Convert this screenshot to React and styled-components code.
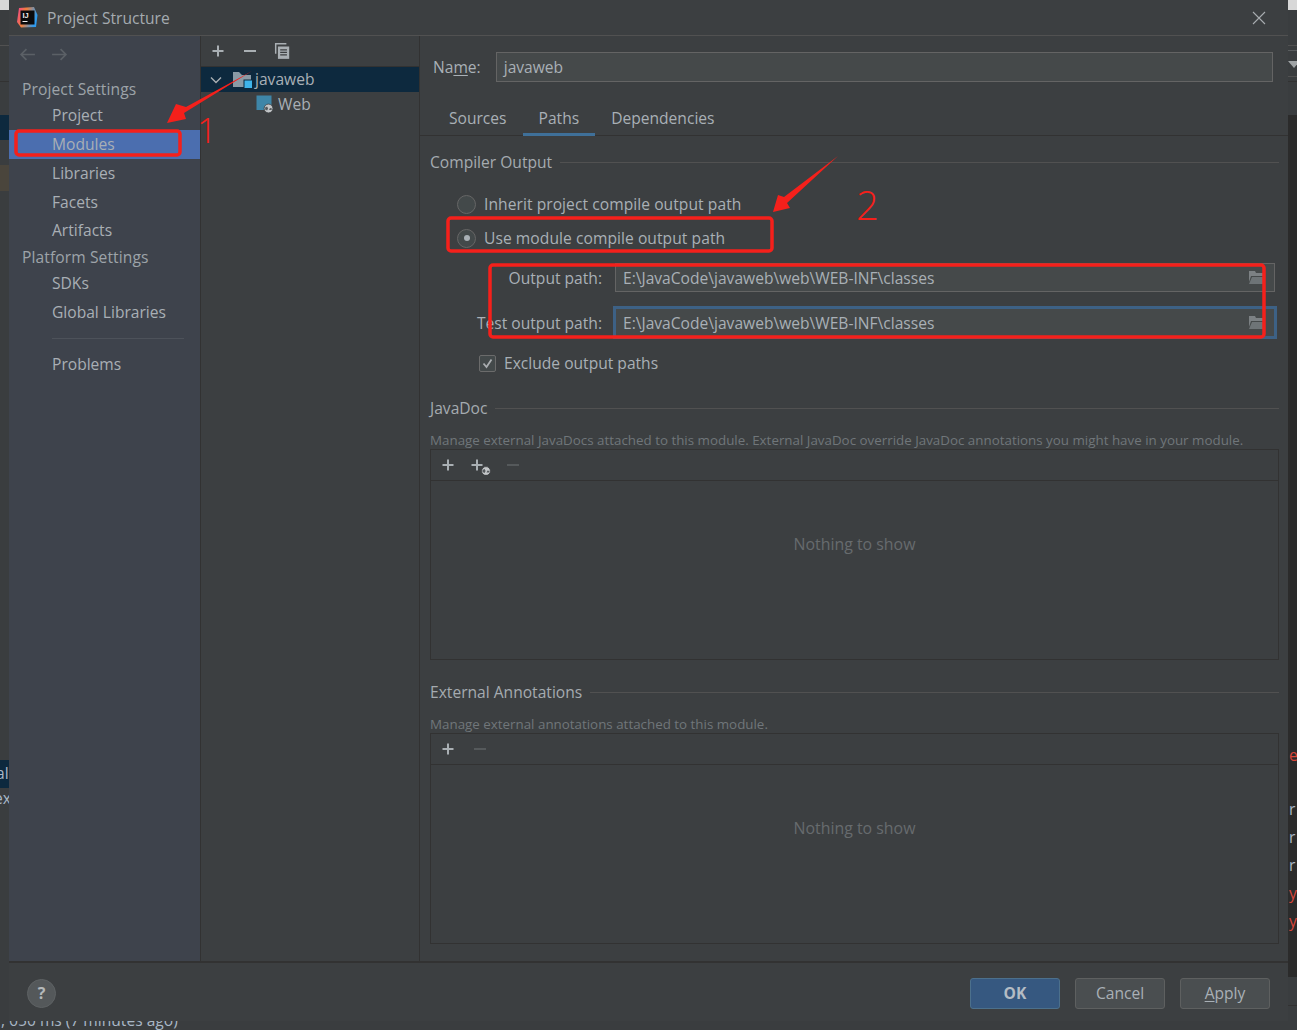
import styled, { createGlobalStyle } from "styled-components";

const GlobalStyle = createGlobalStyle`
  html, body {
    margin: 0;
    padding: 0;
    background: #2b2b2b;
  }
`;

const FONT = `"Open Sans", "Noto Sans", "Liberation Sans", sans-serif`;

const Screen = styled.div`
  position: relative;
  width: 1297px;
  height: 1030px;
  overflow: hidden;
  background: #3a3d3f;
  font-family: ${FONT};
  font-size: 15.6px;
  color: #a9b0b6;
`;
const BehindText = styled.span`
  position: absolute;
  left: ${(p) => p.$x}px;
  top: ${(p) => p.$y}px;
  color: ${(p) => p.$color || "#a9b7c6"};
  font-size: 15.6px;
  line-height: 18px;
  white-space: nowrap;
`;
const BehindBlock = styled.div`
  position: absolute;
  left: ${(p) => p.$x}px;
  top: ${(p) => p.$y}px;
  width: ${(p) => p.$w}px;
  height: ${(p) => p.$h}px;
  background: ${(p) => p.$color};
`;
const BehindTriangle = styled.div`
  position: absolute;
  left: 1288px;
  top: 61px;
  border-left: 6px solid transparent;
  border-right: 6px solid transparent;
  border-top: 7px solid #a0a4a6;
`;
const Dialog = styled.div`
  position: absolute;
  left: 9px;
  top: 0;
  width: 1279px;
  height: 1021px;
  display: flex;
  flex-direction: column;
  background: #3c3f41;
`;
const TitleBar = styled.div`
  height: 35px;
  flex: none;
  display: flex;
  align-items: center;
  padding: 0 22px 0 8px;
  gap: 9px;
  border-bottom: 1px solid #515151;
  color: #a5abb0;
`;
const TitleText = styled.span`
  flex: 1;
`;
const Main = styled.div`
  flex: 1;
  min-height: 0;
  display: flex;
  border-bottom: 2px solid #323232;
`;
const Sidebar = styled.div`
  width: 191px;
  flex: none;
  background: #3e434c;
  border-right: 1px solid #323232;
  display: flex;
  flex-direction: column;
`;
const NavArrows = styled.div`
  height: 36px;
  display: flex;
  align-items: center;
  gap: 15px;
  padding-left: 10px;
  margin-bottom: 4px;
`;
const NavHeading = styled.div`
  height: 26px;
  line-height: 26px;
  padding-left: 13px;
  color: #9da3a9;
  letter-spacing: 0.1px;
`;
const NavItem = styled.div`
  height: ${(p) => p.$h || 29}px;
  line-height: ${(p) => p.$h || 29}px;
  margin-bottom: ${(p) => p.$after || 0}px;
  padding-left: 43px;
  background: ${(p) => (p.$active ? "#4b6eaf" : "transparent")};
  color: #a9afb5;
`;
const NavDivider = styled.div`
  height: 1px;
  margin: 10px 16px 11px 43px;
  background: #4d525a;
`;
const TreePanel = styled.div`
  width: 218px;
  flex: none;
  border-right: 1px solid #323232;
  display: flex;
  flex-direction: column;
`;
const TreeTools = styled.div`
  height: 30px;
  display: flex;
  align-items: center;
  gap: 16px;
  padding-left: 9px;
  border-bottom: 1px solid #323232;
`;
const TreeRow = styled.div`
  height: 25px;
  display: flex;
  align-items: center;
  gap: ${(p) => p.$gap || 0}px;
  padding-left: ${(p) => p.$indent}px;
  background: ${(p) => (p.$selected ? "#0d293e" : "transparent")};
  color: #a9b0b6;
`;
const TreeLabel = styled.span`
  margin-left: ${(p) => p.$shift || 0}px;
  margin-top: -1px;
`;
const Content = styled.div`
  flex: 1;
  min-width: 0;
  display: flex;
  flex-direction: column;
`;
const NameRow = styled.div`
  display: flex;
  align-items: center;
  gap: 15px;
  padding: 16px 15px 0 13px;
`;
const Underlined = styled.span`
  text-decoration: underline;
  text-underline-offset: 2px;
`;
const Field = styled.div`
  flex: 1;
  height: ${(p) => p.$h || 30}px;
  box-sizing: border-box;
  display: flex;
  align-items: center;
  justify-content: space-between;
  padding: 0 9px 0 7px;
  background: #45494a;
  border: 1px solid #646464;
  color: #a9b0b6;
  white-space: nowrap;
`;
const Tabs = styled.div`
  height: 36px;
  margin-top: 17px;
  flex: none;
  display: flex;
  align-items: flex-end;
  padding-left: 13px;
  border-bottom: 1px solid #323232;
`;
const Tab = styled.div`
  height: 36px;
  box-sizing: border-box;
  padding: 6px 16px 0;
  line-height: 24px;
  color: #a9b0b6;
  border-bottom: 3px solid ${(p) => (p.$active ? "#3f7099" : "transparent")};
  margin-bottom: -1px;
`;
const Body = styled.div`
  flex: 1;
  min-height: 0;
  padding: 0 9px 0 10px;
  display: flex;
  flex-direction: column;
`;
const SectionTitle = styled.div`
  display: flex;
  align-items: center;
  gap: 8px;
  height: 20px;
  margin-top: ${(p) => p.$top}px;
  color: #a5abb0;
  white-space: nowrap;
  &::after {
    content: "";
    flex: 1;
    height: 1px;
    background: #515151;
  }
`;
const RadioRow = styled.div`
  display: flex;
  align-items: center;
  gap: 8px;
  height: 24px;
  margin-top: ${(p) => p.$top}px;
  padding-left: 27px;
  letter-spacing: 0.06px;
`;
const Radio = styled.span`
  width: 19px;
  height: 19px;
  box-sizing: border-box;
  border-radius: 50%;
  background: #43494a;
  border: 1px solid #666;
  display: flex;
  align-items: center;
  justify-content: center;
  &::after {
    content: "";
    display: ${(p) => (p.$on ? "block" : "none")};
    width: 6px;
    height: 6px;
    border-radius: 50%;
    background: #a9b0b6;
  }
`;
const PathRow = styled.div`
  display: flex;
  align-items: center;
  gap: 13px;
  margin-top: ${(p) => p.$top}px;
`;
const PathLabel = styled.span`
  width: 172px;
  flex: none;
  text-align: right;
  white-space: nowrap;
`;
const PathField = styled(Field)`
  margin-right: 4px;
  ${(p) => p.$focus && "outline: 2px solid #3d6185; border-color: #3d6185;"}
`;
const CheckRow = styled.div`
  display: flex;
  align-items: center;
  gap: 8px;
  margin-top: 14px;
  padding-left: 49px;
  height: 24px;
`;
const CheckBox = styled.span`
  width: 17px;
  height: 17px;
  box-sizing: border-box;
  display: flex;
  align-items: center;
  justify-content: center;
  background: #43494a;
  border: 1px solid #6b6b6b;
  border-radius: 2px;
`;
const Description = styled.div`
  margin-top: ${(p) => p.$top}px;
  height: 18px;
  line-height: 18px;
  font-size: 13.36px;
  color: #70767a;
  white-space: nowrap;
`;
const ListBox = styled.div`
  height: 211px;
  box-sizing: border-box;
  border: 1px solid #323232;
  display: flex;
  flex-direction: column;
`;
const ListTools = styled.div`
  height: 30px;
  flex: none;
  display: flex;
  align-items: center;
  gap: ${(p) => p.$gap}px;
  padding-left: 9px;
  border-bottom: 1px solid #323232;
`;
const EmptyText = styled.div`
  flex: 1;
  display: flex;
  align-items: center;
  justify-content: center;
  padding-bottom: 52px;
  color: #676b6e;
  font-size: 15.9px;
`;
const Footer = styled.div`
  height: 58px;
  box-sizing: border-box;
  flex: none;
  display: flex;
  align-items: center;
  justify-content: flex-end;
  gap: 15px;
  padding: 2px 18px 0 18px;
`;
const HelpButton = styled.div`
  width: 29px;
  height: 29px;
  margin-right: auto;
  border-radius: 50%;
  background: #54585a;
  border: 1px solid #5e6264;
  box-sizing: border-box;
  display: flex;
  align-items: center;
  justify-content: center;
  color: #b4b8ba;
  font-weight: 700;
  font-size: 16px;
`;
const Button = styled.div`
  width: 90px;
  height: 31px;
  box-sizing: border-box;
  display: flex;
  align-items: center;
  justify-content: center;
  border-radius: 3px;
  background: ${(p) => (p.$primary ? "#365880" : "#4a4e50")};
  border: 1px solid ${(p) => (p.$primary ? "#4c708c" : "#5e6060")};
  color: ${(p) => (p.$primary ? "#b4bcc4" : "#a9b0b6")};
  font-weight: ${(p) => (p.$primary ? 700 : 400)};
`;
const Annotation = styled.svg`
  position: absolute;
  left: 0;
  top: 0;
  pointer-events: none;
`;
const StepNumber = styled.span`
  position: absolute;
  left: ${(p) => p.$x}px;
  top: ${(p) => p.$y}px;
  font-family: "Open Sans", sans-serif;
  font-weight: 300;
  font-size: ${(p) => p.$size}px;
  line-height: 1;
  color: #f5201b;
`;

const IconSvg = ({ size = 16, children }) => (
  <svg width={size} height={size} viewBox="0 0 16 16" fill="none">
    {children}
  </svg>
);

const Logo = () => (
  <svg width="21" height="21" viewBox="0 0 21 21">
    <defs>
      <linearGradient id="ij" x1="0" y1="0" x2="1" y2="0.3">
        <stop offset="0" stopColor="#f23f8f" />
        <stop offset="0.45" stopColor="#f0803c" />
        <stop offset="1" stopColor="#2d9bf0" />
      </linearGradient>
    </defs>
    <path d="M2 1 L17 0 L20.5 8 L19 20 L4 20.5 L0 15 Z" fill="url(#ij)" />
    <rect x="3.5" y="3.5" width="14" height="14" fill="#0b0b0d" />
    <text x="5.5" y="10.5" fontFamily="Liberation Sans" fontWeight="700" fontSize="7.5" fill="#eee">
      IJ
    </text>
    <rect x="5.5" y="14" width="5" height="1" fill="#eee" />
  </svg>
);

const Plus = ({ color = "#a9afb3" }) => (
  <IconSvg>
    <path d="M8 2.5v11M2.5 8h11" stroke={color} strokeWidth="2" />
  </IconSvg>
);
const Minus = ({ color = "#a9afb3" }) => (
  <IconSvg>
    <path d="M2 8h12" stroke={color} strokeWidth="2" />
  </IconSvg>
);
const Copy = () => (
  <IconSvg size={18}>
    <path d="M1.5 10.5V1.5H11" stroke="#a9afb3" strokeWidth="1.3" />
    <rect x="3.5" y="4" width="10" height="11" fill="#a9afb3" />
    <path d="M5.5 7h6M5.5 9.2h6M5.5 11.4h6" stroke="#3c3f41" strokeWidth="1" />
  </IconSvg>
);
const Globe = ({ x, y, r = 3.4 }) => (
  <g>
    <circle cx={x} cy={y} r={r} fill="#c3c6c8" stroke="#3c3f41" strokeWidth="0.8" />
    <path
      d={`M${x - r + 1} ${y - 1}l2-1 1 2-1 2-2-1zM${x + 0.5} ${y + 1.5}l1-2 2 .5-.5 1.5z`}
      fill="#55595c"
    />
  </g>
);
const PlusGlobe = () => (
  <svg width="33" height="20" viewBox="0 0 33 20" fill="none">
    <path d="M13 4.5v11M7.5 10h11" stroke="#a9afb3" strokeWidth="2" />
    <Globe x={22} y={16} r={4.4} />
  </svg>
);
const ArrowLeft = () => (
  <IconSvg size={17}>
    <path d="M15 8H2M7 3L2 8l5 5" stroke="#5b6066" strokeWidth="1.6" />
  </IconSvg>
);
const ArrowRight = () => (
  <IconSvg size={17}>
    <path d="M1 8h13M9 3l5 5-5 5" stroke="#5b6066" strokeWidth="1.6" />
  </IconSvg>
);
const Chevron = () => (
  <svg width="12" height="8" viewBox="0 0 12 8" fill="none">
    <path d="M1 1.5l5 5 5-5" stroke="#a9afb3" strokeWidth="1.4" />
  </svg>
);
const ModuleIcon = () => (
  <svg width="20" height="20" viewBox="0 0 20 20">
    <path d="M0 2h6l3 3h9v12H0z" fill="#8a9aa5" />
    <rect x="11" y="10" width="8.5" height="8.5" fill="#3fb4ea" stroke="#0d293e" strokeWidth="1" />
  </svg>
);
const WebIcon = () => (
  <svg width="18" height="19" viewBox="0 0 18 19">
    <rect x="0.5" y="0.5" width="15" height="14.5" fill="#3e86a8" />
    <Globe x={12.5} y={13.5} r={4.4} />
  </svg>
);
const FolderIcon = () => (
  <svg width="17" height="15" viewBox="0 0 17 15">
    <path d="M1 1h6l1 2h8v3H3L1 12z" fill="#7c8184" />
    <path d="M4 7h13l-2 7H1z" fill="#6e7477" />
  </svg>
);
const CloseIcon = () => (
  <svg width="14" height="14" viewBox="0 0 14 14" fill="none">
    <path d="M1 1l12 12M13 1L1 13" stroke="#a9adb0" strokeWidth="1.1" />
  </svg>
);
const CheckMark = () => (
  <svg width="13" height="13" viewBox="0 0 13 13" fill="none">
    <path d="M2.5 6.5l3 3.5 5-7.5" stroke="#a9adb0" strokeWidth="1.8" />
  </svg>
);

const PATH = "E:\\JavaCode\\javaweb\\web\\WEB-INF\\classes";

const App = () => (
  <Screen>
    <GlobalStyle />

    <BehindBlock $x={0} $y={0} $w={9} $h={10} $color="#d8d8d8" />
    <BehindBlock $x={1288} $y={0} $w={9} $h={10} $color="#d8d8d8" />
    <BehindBlock $x={0} $y={45} $w={9} $h={1} $color="#515151" />
    <BehindBlock $x={0} $y={81} $w={9} $h={1} $color="#323232" />
    <BehindBlock $x={1288} $y={45} $w={9} $h={1} $color="#515151" />
    <BehindBlock $x={1288} $y={50} $w={9} $h={1} $color="#5a5d5f" />
    <BehindBlock $x={1288} $y={76} $w={9} $h={1} $color="#515151" />
    <BehindBlock $x={1288} $y={81} $w={9} $h={1} $color="#323232" />
    <BehindTriangle />
    <BehindBlock $x={0} $y={115} $w={9} $h={25} $color="#0d293e" />
    <BehindBlock $x={0} $y={165} $w={9} $h={26} $color="#4a453c" />
    <BehindBlock $x={0} $y={760} $w={9} $h={28} $color="#0d293e" />
    <BehindBlock $x={1288} $y={115} $w={9} $h={862} $color="#2b2b2b" />
    <BehindBlock $x={1288} $y={1005} $w={9} $h={1} $color="#323232" />
    <BehindText $x={-4} $y={764}>al</BehindText>
    <BehindText $x={-6} $y={789}>ex</BehindText>
    <BehindText $x={1289} $y={746} $color="#d9463a">e</BehindText>
    <BehindText $x={1289} $y={800}>r</BehindText>
    <BehindText $x={1289} $y={828}>r</BehindText>
    <BehindText $x={1289} $y={856}>r</BehindText>
    <BehindText $x={1289} $y={884} $color="#d9463a">y</BehindText>
    <BehindText $x={1289} $y={912} $color="#d9463a">y</BehindText>
    <BehindText $x={1} $y={1011}>, 650 ms (7 minutes ago)</BehindText>

    <Dialog>
      <TitleBar>
        <Logo />
        <TitleText>Project Structure</TitleText>
        <CloseIcon />
      </TitleBar>

      <Main>
        <Sidebar>
          <NavArrows>
            <ArrowLeft />
            <ArrowRight />
          </NavArrows>
          <NavHeading>Project Settings</NavHeading>
          <NavItem $h={26} $after={2}>Project</NavItem>
          <NavItem $active>Modules</NavItem>
          <NavItem>Libraries</NavItem>
          <NavItem>Facets</NavItem>
          <NavItem $h={27}>Artifacts</NavItem>
          <NavHeading>Platform Settings</NavHeading>
          <NavItem $h={26}>SDKs</NavItem>
          <NavItem $h={32}>Global Libraries</NavItem>
          <NavDivider />
          <NavItem>Problems</NavItem>
        </Sidebar>

        <TreePanel>
          <TreeTools>
            <Plus />
            <Minus />
            <Copy />
          </TreeTools>
          <TreeRow $selected $indent={9} $gap={11}>
            <Chevron />
            <ModuleIcon />
            <TreeLabel $shift={-9}>javaweb</TreeLabel>
          </TreeRow>
          <TreeRow $indent={55} $gap={4}>
            <WebIcon />
            <TreeLabel>Web</TreeLabel>
          </TreeRow>
        </TreePanel>

        <Content>
          <NameRow>
            <span>
              Na<Underlined>m</Underlined>e:
            </span>
            <Field>javaweb</Field>
          </NameRow>
          <Tabs>
            <Tab>Sources</Tab>
            <Tab $active>Paths</Tab>
            <Tab>Dependencies</Tab>
          </Tabs>
          <Body>
            <SectionTitle $top={16}>Compiler Output</SectionTitle>
            <RadioRow $top={20}>
              <Radio />
              Inherit project compile output path
            </RadioRow>
            <RadioRow $top={10}>
              <Radio $on />
              Use module compile output path
            </RadioRow>
            <PathRow $top={13}>
              <PathLabel>Output path:</PathLabel>
              <PathField $h={29}>
                {PATH}
                <FolderIcon />
              </PathField>
            </PathRow>
            <PathRow $top={16}>
              <PathLabel>Test output path:</PathLabel>
              <PathField $h={29} $focus>
                {PATH}
                <FolderIcon />
              </PathField>
            </PathRow>
            <CheckRow>
              <CheckBox>
                <CheckMark />
              </CheckBox>
              Exclude output paths
            </CheckRow>
            <SectionTitle $top={23}>JavaDoc</SectionTitle>
            <Description $top={13}>
              Manage external JavaDocs attached to this module. External JavaDoc override JavaDoc annotations you might have in your module.
            </Description>
            <ListBox>
              <ListTools $gap={8}>
                <Plus />
                <PlusGlobe />
                <Minus color="#55595b" />
              </ListTools>
              <EmptyText>Nothing to show</EmptyText>
            </ListBox>
            <SectionTitle $top={22}>External Annotations</SectionTitle>
            <Description $top={13}>Manage external annotations attached to this module.</Description>
            <ListBox>
              <ListTools $gap={16}>
                <Plus />
                <Minus color="#55595b" />
              </ListTools>
              <EmptyText>Nothing to show</EmptyText>
            </ListBox>
          </Body>
        </Content>
      </Main>

      <Footer>
        <HelpButton>?</HelpButton>
        <Button $primary>OK</Button>
        <Button>Cancel</Button>
        <Button>
          <span>
            <Underlined>A</Underlined>pply
          </span>
        </Button>
      </Footer>
    </Dialog>

    <Annotation width="1297" height="1030" viewBox="0 0 1297 1030" fill="none">
      <rect x="16" y="131" width="164" height="24" rx="3" stroke="#f5201b" strokeWidth="3.5" />
      <rect x="448" y="218" width="324" height="33" rx="3" stroke="#f5201b" strokeWidth="3.5" />
      <rect x="490" y="265" width="774" height="72" rx="3" stroke="#f5201b" strokeWidth="3.5" />
      <path d="M252 71 L186 107 L176 104 L167 123 L186 119 L184 113 Z" fill="#f5201b" />
      <path d="M838 156 L784 197 L778 195 L773 212 L790 208 L787 203 Z" fill="#f5201b" />
    </Annotation>
    <StepNumber $x={197} $y={112} $size={35}>1</StepNumber>
    <StepNumber $x={856} $y={185} $size={40}>2</StepNumber>
  </Screen>
);

export default App;
